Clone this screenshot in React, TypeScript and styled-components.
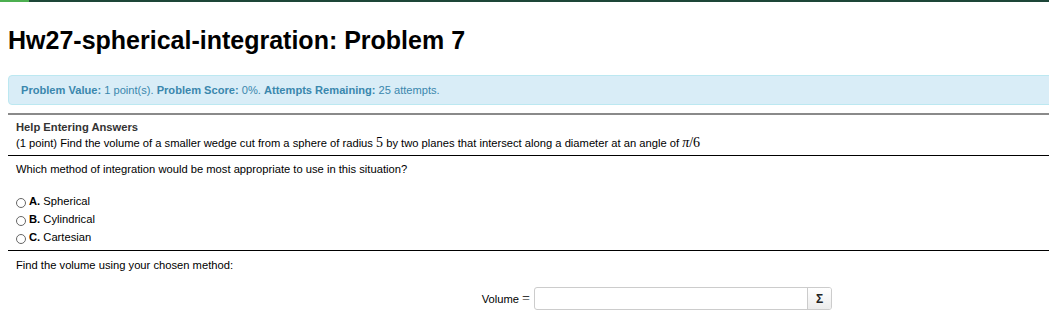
import React from "react";
import styled, { createGlobalStyle } from "styled-components";

const GlobalStyle = createGlobalStyle`
  body {
    margin: 0;
    background: #ffffff;
    font-family: "Liberation Sans", Arial, sans-serif;
    color: #000;
  }
`;

const TopBar = styled.div`
  display: flex;
  height: 2px;
  background-color: #1d4638;
`;

const TopAccent = styled.div`
  width: 29px;
  background-color: #4caf50;
`;

const Page = styled.div`
  padding-left: 8px;
  overflow: hidden;
`;

const Title = styled.h1`
  margin: 0;
  padding-top: 24px;
  height: 49px;
  font-size: 25px;
  font-weight: bold;
  line-height: 28px;
`;

const Alert = styled.div`
  margin-right: -10px;
  height: 28px;
  padding-left: 12px;
  display: flex;
  align-items: center;
  background-color: #d9edf7;
  border: 1px solid #bce8f1;
  border-radius: 4px;
  color: #3a87ad;
  font-size: 11.1px;
  b {
    font-weight: bold;
  }
`;

const Spacer = styled.div`
  height: 8px;
`;

const Rule = styled.hr<{ $dark?: boolean }>`
  margin: 0;
  border: none;
  height: ${(p) => (p.$dark ? "1px" : "2px")};
  background-color: ${(p) => (p.$dark ? "#000" : "#8a8a8a")};
`;

const Section = styled.div<{ $top: number; $bottom: number }>`
  padding: ${(p) => p.$top}px 0 ${(p) => p.$bottom}px 8px;
  font-size: 11.2px;
  line-height: 15px;
`;

const HelpLink = styled.div`
  font-weight: bold;
  color: #333;
`;

const ProblemText = styled.div`
  margin-top: 1px;
`;

const MathText = styled.span`
  font-family: "Liberation Serif", "DejaVu Serif", serif;
  font-size: 14px;
  line-height: 1;
`;

const MathItalic = styled(MathText)`
  font-style: italic;
`;

const Choices = styled.div`
  display: flex;
  flex-direction: column;
  gap: 1px;
  padding: 16px 0 0 0;
`;

const Choice = styled.label`
  display: flex;
  align-items: center;
  gap: 3px;
  height: 17px;
  font-size: 11.2px;
`;

const Radio = styled.span`
  width: 10px;
  height: 10px;
  border-radius: 50%;
  border: 1px solid #666;
  box-sizing: border-box;
  margin-top: 2px;
`;

const AnswerRow = styled.div`
  display: flex;
  align-items: center;
  padding-left: 470px;
  gap: 4px;
  margin-top: 14px;
`;

const Label = styled.span`
  font-size: 11.2px;
  width: 52px;
  text-align: right;
`;

const InputGroup = styled.div`
  display: flex;
  width: 298px;
  height: 23px;
  border: 1px solid #ccc;
  border-radius: 3px;
  box-sizing: border-box;
  overflow: hidden;
`;

const Field = styled.div`
  flex: 1;
`;

const SigmaButton = styled.div`
  width: 23px;
  display: flex;
  align-items: center;
  justify-content: center;
  background: linear-gradient(#ffffff, #ececec);
  border-left: 1px solid #ccc;
  font-size: 12px;
  font-weight: bold;
  color: #222;
`;

export default function App() {
  return (
    <>
      <GlobalStyle />
      <TopBar>
        <TopAccent />
      </TopBar>
      <Page>
        <Title>Hw27-spherical-integration: Problem 7</Title>
        <Alert>
          <span>
            <b>Problem Value:</b> 1 point(s). <b>Problem Score:</b> 0%.{" "}
            <b>Attempts Remaining:</b> 25 attempts.
          </span>
        </Alert>
        <Spacer />
        <Rule />
        <Section $top={5} $bottom={4}>
          <HelpLink>Help Entering Answers</HelpLink>
          <ProblemText>
            (1 point) Find the volume of a smaller wedge cut from a sphere of radius{" "}
            <MathText>5</MathText> by two planes that intersect along a diameter at an
            angle of <MathItalic>π</MathItalic>
            <MathText>/6</MathText>
          </ProblemText>
        </Section>
        <Rule $dark />
        <Section $top={6} $bottom={4}>
          <div>Which method of integration would be most appropriate to use in this situation?</div>
          <Choices>
            <Choice>
              <Radio />
              <span>
                <b>A.</b> Spherical
              </span>
            </Choice>
            <Choice>
              <Radio />
              <span>
                <b>B.</b> Cylindrical
              </span>
            </Choice>
            <Choice>
              <Radio />
              <span>
                <b>C.</b> Cartesian
              </span>
            </Choice>
          </Choices>
        </Section>
        <Rule $dark />
        <Section $top={7} $bottom={0}>
          <div>Find the volume using your chosen method:</div>
        </Section>
        <AnswerRow>
          <Label>
            Volume <MathText>=</MathText>
          </Label>
          <InputGroup>
            <Field />
            <SigmaButton>Σ</SigmaButton>
          </InputGroup>
        </AnswerRow>
      </Page>
    </>
  );
}
